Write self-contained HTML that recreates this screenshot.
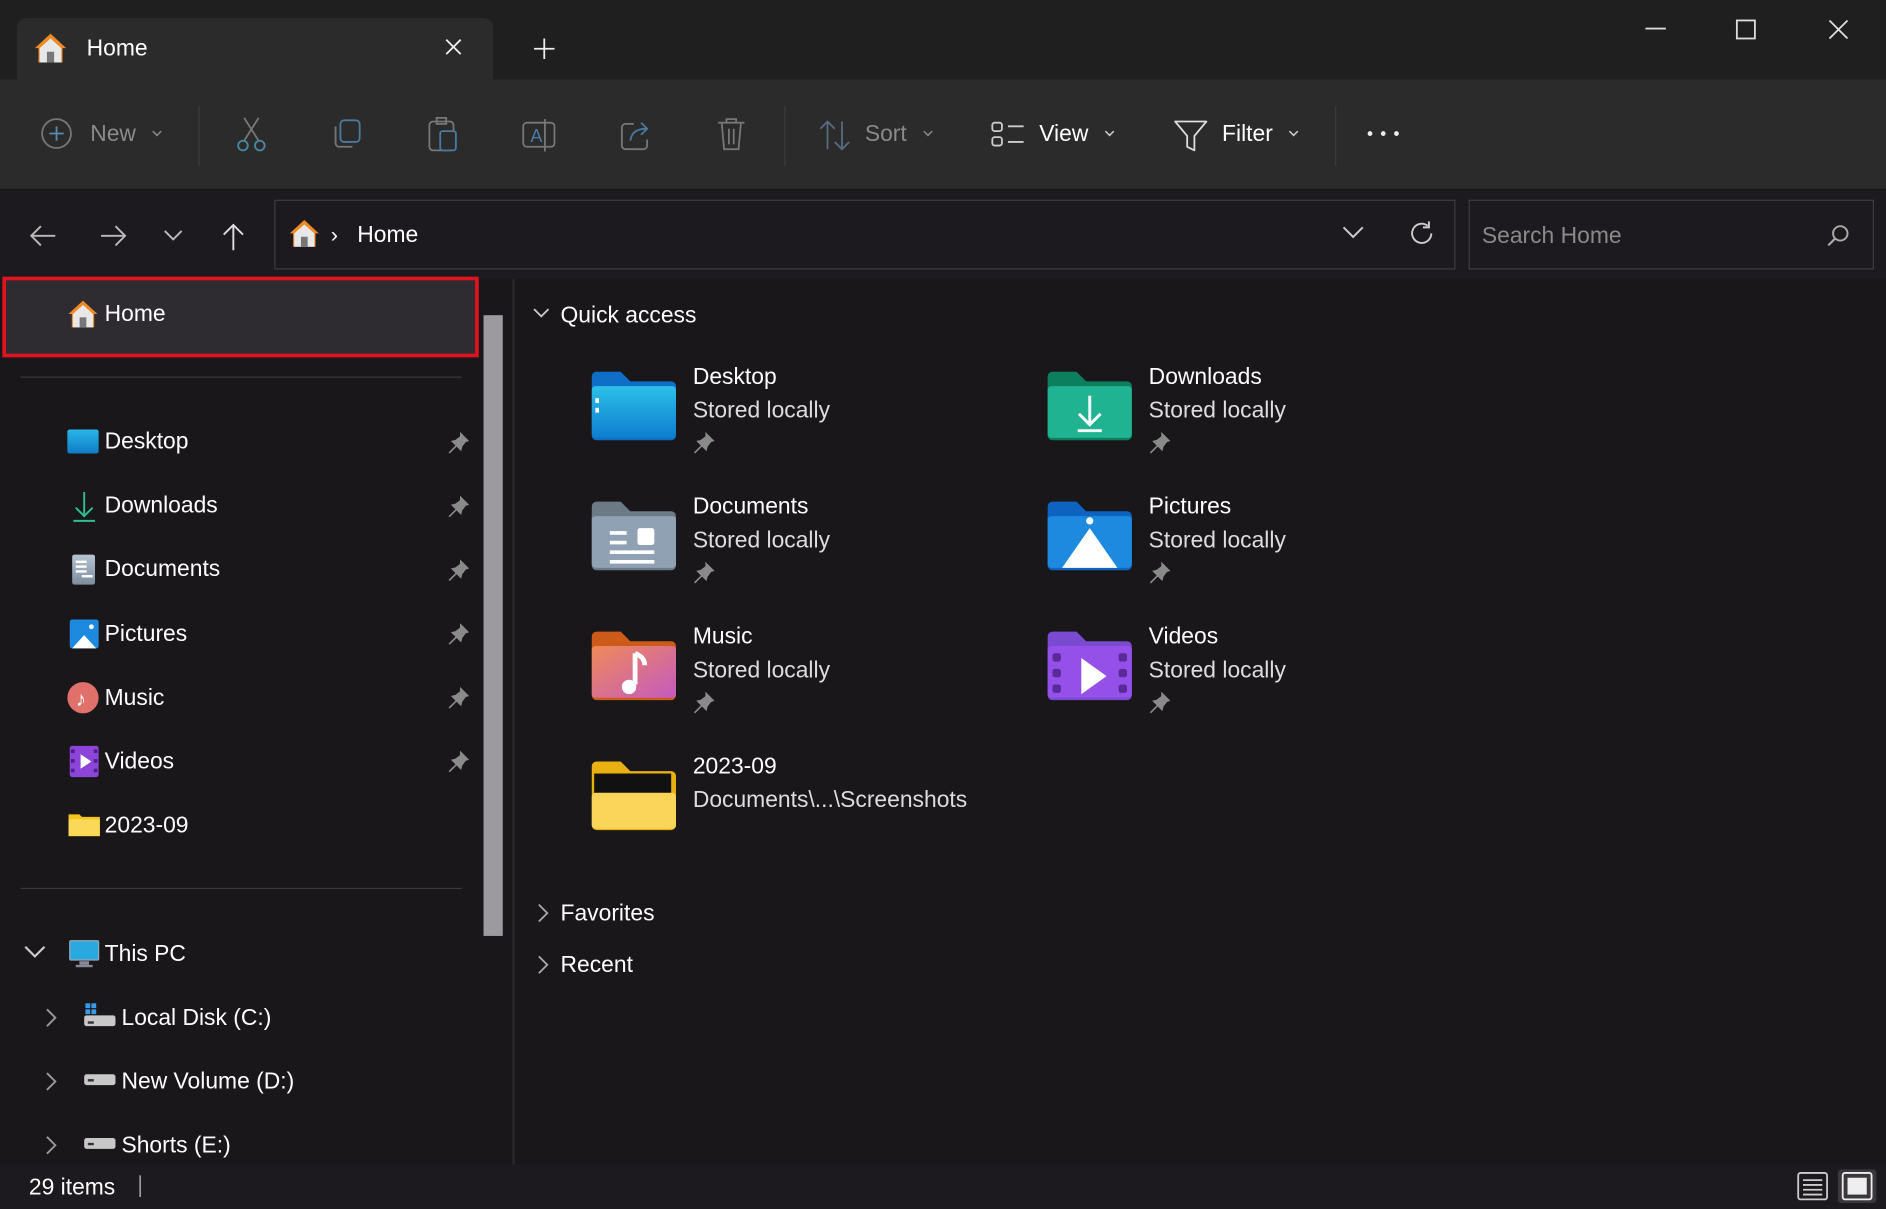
<!DOCTYPE html>
<html><head><meta charset="utf-8">
<style>
html,body{margin:0;padding:0;background:#1a171b;overflow:hidden;width:1886px;height:1209px}
#w{position:absolute;left:0;top:0;width:1568px;height:1005px;transform:scale(1.20281,1.2030);transform-origin:0 0;background:#1a171b;font-family:"Liberation Sans",sans-serif;color:#fff;font-size:19px}
.a{position:absolute}
.t{position:absolute;white-space:nowrap;line-height:1}
.g{color:#8a8a8a}
svg{position:absolute;overflow:visible}
</style></head><body><div id="w">
<!-- title bar -->
<div class="a" style="left:0;top:0;width:1568px;height:66px;background:#1f1f1f"></div>
<div class="a" style="left:14px;top:15px;width:396px;height:55px;background:#2b2b2b;border-radius:8px 8px 0 0"></div>
<svg style="left:28px;top:27px" width="28" height="26" viewBox="0 0 28 26"><path d="M14 1 L27 13 L24 13 L24 25 L4 25 L4 13 L1 13Z" fill="#f08a24"/><path d="M14 5 L23 13 L23 25 L5 25 L5 13Z" fill="#e8e8e8"/><rect x="11" y="16" width="6" height="9" fill="#777"/></svg>
<div class="t" style="left:72px;top:31px;font-size:19px">Home</div>
<svg style="left:370px;top:32px" width="14" height="14"><path d="M1 1L13 13M13 1L1 13" stroke="#eee" stroke-width="1.5"/></svg>
<svg style="left:444px;top:32px" width="17" height="17"><path d="M8.5 0v17M0 8.5h17" stroke="#eee" stroke-width="1.5"/></svg>
<svg style="left:1368px;top:23px" width="18" height="2"><rect width="17" height="1.5" fill="#ddd"/></svg>
<svg style="left:1443px;top:16px" width="17" height="17"><rect x="1" y="1" width="15" height="15" fill="none" stroke="#ddd" stroke-width="1.5"/></svg>
<svg style="left:1520px;top:16px" width="17" height="17"><path d="M1 1L16 16M16 1L1 16" stroke="#ddd" stroke-width="1.5"/></svg>
<!-- toolbar -->
<div class="a" style="left:0;top:66px;width:1568px;height:91px;background:#2b2b2b;border-bottom:1px solid #1a1a1a"></div>
<svg style="left:34px;top:98px" width="26" height="26"><circle cx="13" cy="13" r="12" fill="none" stroke="#777" stroke-width="1.5"/><path d="M13 7v12M7 13h12" stroke="#5a8ab0" stroke-width="1.5"/></svg>
<div class="t g" style="left:75px;top:102px">New</div>
<svg style="left:126px;top:108px" width="9" height="6"><path d="M1 1l3.5 3.5L8 1" fill="none" stroke="#888" stroke-width="1.3"/></svg>
<div class="a" style="left:165px;top:88px;width:1px;height:50px;background:#3c3c3c"></div>
<svg style="left:196px;top:97px" width="26" height="30"><path d="M7 1L19 20M19 1L7 20" stroke="#777" stroke-width="1.5"/><circle cx="6" cy="24" r="4" fill="none" stroke="#4a8aa0" stroke-width="1.5"/><circle cx="20" cy="24" r="4" fill="none" stroke="#4a8aa0" stroke-width="1.5"/></svg>
<svg style="left:276px;top:99px" width="26" height="26"><rect x="7" y="1" width="16" height="18" rx="3" fill="none" stroke="#4a7aa0" stroke-width="1.5"/><path d="M3 6v14a3 3 0 0 0 3 3h11" fill="none" stroke="#777" stroke-width="1.5"/></svg>
<svg style="left:356px;top:97px" width="26" height="30"><rect x="1" y="4" width="20" height="24" rx="3" fill="none" stroke="#777" stroke-width="1.5"/><rect x="7" y="1" width="8" height="5" fill="none" stroke="#777" stroke-width="1.5"/><rect x="10" y="12" width="13" height="16" rx="2" fill="#2b2b2b" stroke="#4a7aa0" stroke-width="1.5"/></svg>
<svg style="left:434px;top:99px" width="30" height="28"><rect x="1" y="3" width="26" height="20" rx="3" fill="none" stroke="#777" stroke-width="1.5"/><text x="7" y="19" font-size="15" fill="#4a7aa0" font-family="Liberation Sans">A</text><path d="M19 0v27" stroke="#777" stroke-width="1.5"/></svg>
<svg style="left:515px;top:98px" width="28" height="28"><path d="M12 5H5a3 3 0 0 0-3 3v15a3 3 0 0 0 3 3h15a3 3 0 0 0 3-3v-5" fill="none" stroke="#777" stroke-width="1.5"/><path d="M9 19c1-7 6-10 13-10M18 4l5 5-5 5" fill="none" stroke="#4a7aa0" stroke-width="1.5"/></svg>
<svg style="left:596px;top:97px" width="24" height="30"><path d="M1 5h22M8 5V2h8v3M4 5l2 22h12l2-22M10 10v13M14 10v13" fill="none" stroke="#777" stroke-width="1.5"/></svg>
<div class="a" style="left:652px;top:88px;width:1px;height:50px;background:#3c3c3c"></div>
<svg style="left:680px;top:99px" width="28" height="28"><path d="M8 25V2M2 8l6-6 6 6M20 2v23M14 19l6 6 6-6" fill="none" stroke="#5a6a80" stroke-width="1.5"/></svg>
<div class="t g" style="left:719px;top:102px">Sort</div>
<svg style="left:767px;top:108px" width="9" height="6"><path d="M1 1l3.5 3.5L8 1" fill="none" stroke="#888" stroke-width="1.3"/></svg>
<svg style="left:824px;top:101px" width="28" height="22"><rect x="1" y="1" width="8" height="7" rx="2" fill="none" stroke="#ccc" stroke-width="1.5"/><rect x="1" y="13" width="8" height="7" rx="2" fill="none" stroke="#ccc" stroke-width="1.5"/><path d="M14 4h13M14 17h13" stroke="#ccc" stroke-width="1.5"/></svg>
<div class="t" style="left:864px;top:102px">View</div>
<svg style="left:918px;top:108px" width="9" height="6"><path d="M1 1l3.5 3.5L8 1" fill="none" stroke="#ccc" stroke-width="1.3"/></svg>
<svg style="left:976px;top:99px" width="28" height="28"><path d="M1 2h26L17 14v12l-6-3v-9Z" fill="none" stroke="#ddd" stroke-width="1.5" stroke-linejoin="round"/></svg>
<div class="t" style="left:1016px;top:102px">Filter</div>
<svg style="left:1071px;top:108px" width="9" height="6"><path d="M1 1l3.5 3.5L8 1" fill="none" stroke="#ccc" stroke-width="1.3"/></svg>
<div class="a" style="left:1110px;top:88px;width:1px;height:50px;background:#3c3c3c"></div>
<svg style="left:1137px;top:109px" width="28" height="4"><circle cx="2" cy="2" r="2" fill="#eee"/><circle cx="13" cy="2" r="2" fill="#eee"/><circle cx="24" cy="2" r="2" fill="#eee"/></svg>
<!-- nav -->
<div class="a" style="left:0;top:158px;width:1568px;height:74px;background:#1c1a1e"></div>
<svg style="left:24px;top:186px" width="24" height="20"><path d="M22 10H2M10 2L2 10l8 8" fill="none" stroke="#bbb" stroke-width="1.6"/></svg>
<svg style="left:82px;top:186px" width="24" height="20"><path d="M2 10h20M14 2l8 8-8 8" fill="none" stroke="#bbb" stroke-width="1.6"/></svg>
<svg style="left:136px;top:191px" width="16" height="10"><path d="M1 1l7 7 7-7" fill="none" stroke="#bbb" stroke-width="1.6"/></svg>
<svg style="left:184px;top:185px" width="20" height="24"><path d="M10 23V2M2 10l8-8 8 8" fill="none" stroke="#ddd" stroke-width="1.6"/></svg>
<div class="a" style="left:228px;top:166px;width:980px;height:56px;border:1px solid #3d3d3d;background:#1c1a1e"></div>
<svg style="left:240px;top:181px" width="26" height="26" viewBox="0 0 28 26"><path d="M14 1 L27 13 L24 13 L24 25 L4 25 L4 13 L1 13Z" fill="#f08a24"/><path d="M14 5 L23 13 L23 25 L5 25 L5 13Z" fill="#e8e8e8"/><rect x="11" y="16" width="6" height="9" fill="#777"/></svg>
<div class="t" style="left:275px;top:186px;font-size:18px">›</div>
<div class="t" style="left:297px;top:186px">Home</div>
<svg style="left:1116px;top:188px" width="18" height="12"><path d="M1 1l8 8 8-8" fill="none" stroke="#ccc" stroke-width="1.6"/></svg>
<svg style="left:1171px;top:183px" width="22" height="22"><path d="M19 11a8 8 0 1 1-3-6.3M17 1v5h-5" fill="none" stroke="#ccc" stroke-width="1.6"/></svg>
<div class="a" style="left:1221px;top:166px;width:335px;height:56px;border:1px solid #3d3d3d;background:#1c1a1e"></div>
<div class="t" style="left:1232px;top:187px;color:#8a8a8a">Search Home</div>
<svg style="left:1518px;top:186px" width="20" height="20"><circle cx="12" cy="8" r="6" fill="none" stroke="#aaa" stroke-width="1.6"/><path d="M8 12l-6 6" stroke="#aaa" stroke-width="1.8"/></svg>
<!-- sidebar -->
<div class="a" style="left:2px;top:230px;width:390px;height:61px;border:3px solid #e0131f;background:#2e2c30"></div>
<svg style="left:56px;top:248px" width="26" height="26" viewBox="0 0 28 26"><path d="M14 1 L27 13 L24 13 L24 25 L4 25 L4 13 L1 13Z" fill="#f08a24"/><path d="M14 5 L23 13 L23 25 L5 25 L5 13Z" fill="#e8e8e8"/><rect x="11" y="16" width="6" height="9" fill="#777"/></svg>
<div class="t" style="left:87px;top:252px">Home</div>
<div class="a" style="left:402px;top:262px;width:16px;height:516px;background:#9c9a9e"></div>
<div class="a" style="left:426px;top:232px;width:2px;height:736px;background:#2a282c"></div>
<div class="a" style="left:17px;top:313px;width:367px;height:1px;background:#3a383c"></div>
<div class="a" style="left:17px;top:738px;width:367px;height:1px;background:#3a383c"></div>

<div class="a" style="left:56px;top:357px;width:26px;height:20px;background:linear-gradient(#29b6e8,#0f7bc6);border-radius:2px"></div>
<div class="t" style="left:87px;top:358px">Desktop</div>
<svg style="left:60px;top:408px" width="20" height="26"><path d="M10 1v20M3 14l7 7 7-7M1 25h18" fill="none" stroke="#2fbf8f" stroke-width="1.6"/></svg>
<div class="t" style="left:87px;top:411px">Downloads</div>
<div class="a" style="left:60px;top:461px;width:19px;height:25px;background:linear-gradient(#b7c4d2,#7d8d9e);border-radius:2px"></div>
<div class="a" style="left:63px;top:466px;width:9px;height:2px;background:#fff;box-shadow:0 4px #fff,0 8px 0 0 #fff,5px 12px 0 0 #fff"></div>
<div class="t" style="left:87px;top:464px">Documents</div>
<svg style="left:58px;top:515px" width="24" height="24"><rect width="24" height="24" rx="2" fill="#1d8ae0"/><path d="M2 24L12 13L22 24Z" fill="#fff"/><circle cx="18" cy="6" r="2" fill="#fff"/></svg>
<div class="t" style="left:87px;top:518px">Pictures</div>
<svg style="left:56px;top:567px" width="26" height="26"><circle cx="13" cy="13" r="13" fill="#e0706a"/><text x="7" y="20" font-size="17" fill="#fff">♪</text></svg>
<div class="t" style="left:87px;top:571px">Music</div>
<svg style="left:58px;top:620px" width="24" height="26"><rect width="24" height="26" rx="2" fill="#8c45d8"/><path d="M9 7v12l9-6Z" fill="#fff"/><rect x="1" y="3" width="3" height="3" fill="#4a1f8a"/><rect x="1" y="11" width="3" height="3" fill="#4a1f8a"/><rect x="1" y="19" width="3" height="3" fill="#4a1f8a"/><rect x="20" y="3" width="3" height="3" fill="#4a1f8a"/><rect x="20" y="11" width="3" height="3" fill="#4a1f8a"/><rect x="20" y="19" width="3" height="3" fill="#4a1f8a"/></svg>
<div class="t" style="left:87px;top:624px">Videos</div>
<svg style="left:57px;top:675px" width="26" height="20"><path d="M0 2h9l2 2h15v16H0Z" fill="#f5c518"/><rect y="6" width="26" height="14" fill="#fbd858"/></svg>
<div class="t" style="left:87px;top:677px">2023-09</div>

<svg style="left:20px;top:786px" width="18" height="12"><path d="M1 1l8 8 8-8" fill="none" stroke="#ccc" stroke-width="1.8"/></svg>
<svg style="left:57px;top:781px" width="26" height="24"><rect x="1" y="1" width="24" height="16" rx="1" fill="#2aa8e0" stroke="#9ab" stroke-width="1"/><rect x="9" y="18" width="8" height="3" fill="#889"/><rect x="6" y="21" width="14" height="2" fill="#889"/></svg>
<div class="t" style="left:87px;top:784px">This PC</div>
<svg style="left:38px;top:838px" width="10" height="16"><path d="M1 1l7 7-7 7" fill="none" stroke="#999" stroke-width="1.6"/></svg>
<svg style="left:38px;top:891px" width="10" height="16"><path d="M1 1l7 7-7 7" fill="none" stroke="#999" stroke-width="1.6"/></svg>
<svg style="left:38px;top:944px" width="10" height="16"><path d="M1 1l7 7-7 7" fill="none" stroke="#999" stroke-width="1.6"/></svg>
<svg style="left:70px;top:834px" width="26" height="20"><rect x="1" y="0" width="4" height="4" fill="#3a9ae8"/><rect x="6" y="0" width="4" height="4" fill="#3a9ae8"/><rect x="1" y="5" width="4" height="4" fill="#3a9ae8"/><rect x="6" y="5" width="4" height="4" fill="#3a9ae8"/><rect x="0" y="10" width="26" height="9" rx="2" fill="#c8c8c8"/><rect x="3" y="15" width="5" height="2" fill="#333"/></svg>
<div class="t" style="left:101px;top:837px">Local Disk (C:)</div>
<svg style="left:70px;top:891px" width="26" height="12"><rect x="0" y="2" width="26" height="9" rx="2" fill="#c8c8c8"/><rect x="3" y="6" width="5" height="2" fill="#333"/></svg>
<div class="t" style="left:101px;top:890px">New Volume (D:)</div>
<svg style="left:70px;top:944px" width="26" height="12"><rect x="0" y="2" width="26" height="9" rx="2" fill="#c8c8c8"/><rect x="3" y="6" width="5" height="2" fill="#333"/></svg>
<div class="t" style="left:101px;top:943px">Shorts (E:)</div>

<!-- status bar -->
<div class="a" style="left:0;top:968px;width:1568px;height:37px;background:#1c1a1e"></div>
<div class="t" style="left:24px;top:978px">29 items</div>
<div class="a" style="left:116px;top:977px;width:1px;height:18px;background:#ccc"></div>
<svg style="left:1494px;top:974px" width="26" height="24"><rect x="1" y="1" width="24" height="22" rx="2" fill="none" stroke="#ccc" stroke-width="1.5"/><path d="M5 7h16M5 11h16M5 15h16M5 19h16" stroke="#ccc" stroke-width="1.5"/></svg>
<div class="a" style="left:1528px;top:972px;width:32px;height:28px;background:#3a383c;border-radius:3px"></div>
<svg style="left:1531px;top:974px" width="26" height="24"><rect x="1" y="1" width="24" height="22" rx="2" fill="none" stroke="#eee" stroke-width="1.5"/><rect x="5" y="5" width="16" height="14" fill="#eee"/></svg>

<!-- content -->
<svg style="left:443px;top:256px" width="14" height="10"><path d="M1 1l6 6 6-6" fill="none" stroke="#ccc" stroke-width="1.5"/></svg>
<div class="t" style="left:466px;top:253px">Quick access</div>

<svg style="left:492px;top:309px" width="70" height="57"><path d="M0 4a4 4 0 0 1 4-4h20l8 8h34a4 4 0 0 1 4 4v41a4 4 0 0 1-4 4H4a4 4 0 0 1-4-4Z" fill="#0f6fc8"/><rect y="12" width="70" height="43" rx="3" fill="url(#gd)"/><defs><linearGradient id="gd" x1="0" y1="0" x2="0" y2="1"><stop offset="0" stop-color="#2cc0e8"/><stop offset="1" stop-color="#0e7dcf"/></linearGradient></defs><rect x="3" y="22" width="3" height="4" fill="#fff"/><rect x="3" y="30" width="3" height="4" fill="#fff"/></svg>
<div class="t" style="left:576px;top:304px">Desktop</div>
<div class="t" style="left:576px;top:332px;color:#ddd">Stored locally</div>
<svg style="left:871px;top:309px" width="70" height="57"><path d="M0 4a4 4 0 0 1 4-4h20l8 8h34a4 4 0 0 1 4 4v41a4 4 0 0 1-4 4H4a4 4 0 0 1-4-4Z" fill="#0b7f5e"/><rect y="12" width="70" height="43" rx="3" fill="#1fb391"/><path d="M35 20v24M26 35l9 9 9-9M25 49h20" fill="none" stroke="#fff" stroke-width="2.4"/></svg>
<div class="t" style="left:955px;top:304px">Downloads</div>
<div class="t" style="left:955px;top:332px;color:#ddd">Stored locally</div>
<svg style="left:492px;top:417px" width="70" height="57"><path d="M0 4a4 4 0 0 1 4-4h20l8 8h34a4 4 0 0 1 4 4v41a4 4 0 0 1-4 4H4a4 4 0 0 1-4-4Z" fill="#6c7a86"/><rect y="12" width="70" height="43" rx="3" fill="#8fa1b3"/><path d="M15 26h14M15 34h14M15 42h37M15 50h37" stroke="#fff" stroke-width="3"/><rect x="38" y="22" width="14" height="14" rx="2" fill="#fff"/></svg>
<div class="t" style="left:576px;top:412px">Documents</div>
<div class="t" style="left:576px;top:440px;color:#ddd">Stored locally</div>
<svg style="left:871px;top:417px" width="70" height="57"><path d="M0 4a4 4 0 0 1 4-4h20l8 8h34a4 4 0 0 1 4 4v41a4 4 0 0 1-4 4H4a4 4 0 0 1-4-4Z" fill="#0e62c0"/><rect y="12" width="70" height="43" rx="3" fill="#1d8ae0"/><path d="M12 55L35 22L58 55Z" fill="#fff"/><circle cx="35" cy="16" r="3" fill="#fff"/></svg>
<div class="t" style="left:955px;top:412px">Pictures</div>
<div class="t" style="left:955px;top:440px;color:#ddd">Stored locally</div>
<svg style="left:492px;top:525px" width="70" height="57"><path d="M0 4a4 4 0 0 1 4-4h20l8 8h34a4 4 0 0 1 4 4v41a4 4 0 0 1-4 4H4a4 4 0 0 1-4-4Z" fill="#cc5a18"/><rect y="12" width="70" height="43" rx="3" fill="url(#gm)"/><defs><linearGradient id="gm" x1="0" y1="0" x2="1" y2="1"><stop offset="0" stop-color="#f08a58"/><stop offset="1" stop-color="#c45ac0"/></linearGradient></defs><path d="M36 18v26" stroke="#fff" stroke-width="4"/><circle cx="31" cy="46" r="6" fill="#fff"/><path d="M36 18c4 2 8 4 8 10" fill="none" stroke="#fff" stroke-width="4"/></svg>
<div class="t" style="left:576px;top:520px">Music</div>
<div class="t" style="left:576px;top:548px;color:#ddd">Stored locally</div>
<svg style="left:871px;top:525px" width="70" height="57"><path d="M0 4a4 4 0 0 1 4-4h20l8 8h34a4 4 0 0 1 4 4v41a4 4 0 0 1-4 4H4a4 4 0 0 1-4-4Z" fill="#7a4ad0"/><rect y="12" width="70" height="43" rx="3" fill="#9450e8"/><path d="M28 22v30l21-15Z" fill="#fff"/><g fill="#5a2a9a"><rect x="4" y="18" width="7" height="7" rx="2"/><rect x="4" y="31" width="7" height="7" rx="2"/><rect x="4" y="44" width="7" height="7" rx="2"/><rect x="59" y="18" width="7" height="7" rx="2"/><rect x="59" y="31" width="7" height="7" rx="2"/><rect x="59" y="44" width="7" height="7" rx="2"/></g></svg>
<div class="t" style="left:955px;top:520px">Videos</div>
<div class="t" style="left:955px;top:548px;color:#ddd">Stored locally</div>
<svg style="left:492px;top:633px" width="70" height="57"><path d="M0 4a4 4 0 0 1 4-4h20l8 8h34a4 4 0 0 1 4 4v41a4 4 0 0 1-4 4H4a4 4 0 0 1-4-4Z" fill="#e8b010"/><rect x="2" y="10" width="64" height="24" fill="#111"/><rect y="26" width="70" height="30" rx="3" fill="#fbd55a"/></svg>
<div class="t" style="left:576px;top:628px">2023-09</div>
<div class="t" style="left:576px;top:656px;color:#ddd">Documents\...\Screenshots</div>

<svg width="0" height="0"><defs><symbol id="pin" viewBox="0 0 20 20"><path d="M11 1l8 8-3 1-3 4-1 4-4-4-6 6-1-1 6-6-4-4 4-1 4-3Z" fill="#8a8a8a"/></symbol></defs></svg>
<svg style="left:576px;top:358px" width="19" height="19"><use href="#pin"/></svg>
<svg style="left:955px;top:358px" width="19" height="19"><use href="#pin"/></svg>
<svg style="left:576px;top:466px" width="19" height="19"><use href="#pin"/></svg>
<svg style="left:955px;top:466px" width="19" height="19"><use href="#pin"/></svg>
<svg style="left:576px;top:574px" width="19" height="19"><use href="#pin"/></svg>
<svg style="left:955px;top:574px" width="19" height="19"><use href="#pin"/></svg>
<svg style="left:372px;top:358px" width="19" height="19"><use href="#pin"/></svg>
<svg style="left:372px;top:411px" width="19" height="19"><use href="#pin"/></svg>
<svg style="left:372px;top:464px" width="19" height="19"><use href="#pin"/></svg>
<svg style="left:372px;top:517px" width="19" height="19"><use href="#pin"/></svg>
<svg style="left:372px;top:570px" width="19" height="19"><use href="#pin"/></svg>
<svg style="left:372px;top:623px" width="19" height="19"><use href="#pin"/></svg>

<svg style="left:447px;top:751px" width="10" height="16"><path d="M1 1l7 7-7 7" fill="none" stroke="#aaa" stroke-width="1.5"/></svg>
<div class="t" style="left:466px;top:750px">Favorites</div>
<svg style="left:447px;top:794px" width="10" height="16"><path d="M1 1l7 7-7 7" fill="none" stroke="#aaa" stroke-width="1.5"/></svg>
<div class="t" style="left:466px;top:793px">Recent</div>
</div></body></html>
